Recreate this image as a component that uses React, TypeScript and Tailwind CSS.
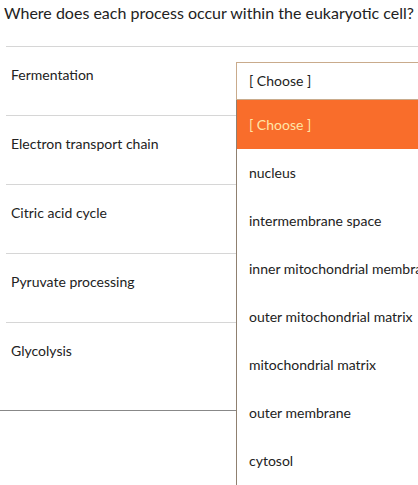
import React from 'react';

const rows = ['Fermentation', 'Electron transport chain', 'Citric acid cycle', 'Pyruvate processing', 'Glycolysis'];

const options = [
  'nucleus',
  'intermembrane space',
  'inner mitochondrial membrane',
  'outer mitochondrial matrix',
  'mitochondrial matrix',
  'outer membrane',
  'cytosol',
];

export default function App() {
  return (
    <div className="relative w-[418px] h-[485px] overflow-hidden bg-white text-[#222] font-['Lato',sans-serif]">
      {/* Question */}
      <p className="pl-[4px] pt-[2px] text-[16px] leading-[22px]">
        Where does each process occur within the eukaryotic cell?
      </p>

      {/* Answer rows */}
      <div className="mt-[22px] border-b border-[#888]">
        {rows.map((label, i) => (
          <div
            key={label}
            className={`ml-[6px] flex border-t border-[#d6d6d6] ${i === rows.length - 1 ? 'h-[88px]' : 'h-[69px]'}`}
          >
            <div className="w-[230px] shrink-0 pl-[5px] pt-[19px] text-[14px] leading-[18px]">{label}</div>
            {i === 0 && (
              <div className="mt-[15px] h-[38px] w-[200px] shrink-0 border border-[#c9ab8c] bg-white pl-[12px] text-[14px] leading-[36px]">
                [ Choose ]
              </div>
            )}
          </div>
        ))}
      </div>

      {/* Open dropdown */}
      <div className="absolute left-[236px] top-[100px] w-[220px] border-l border-[#8f8070] bg-white text-[14px]">
        <div className="h-[49px] bg-[#f96d2b] pl-[12px] leading-[49px] text-[#ffe6a8]">[ Choose ]</div>
        {options.map((o) => (
          <div key={o} className="h-[48px] whitespace-nowrap pl-[12px] leading-[48px]">
            {o}
          </div>
        ))}
      </div>
    </div>
  );
}
